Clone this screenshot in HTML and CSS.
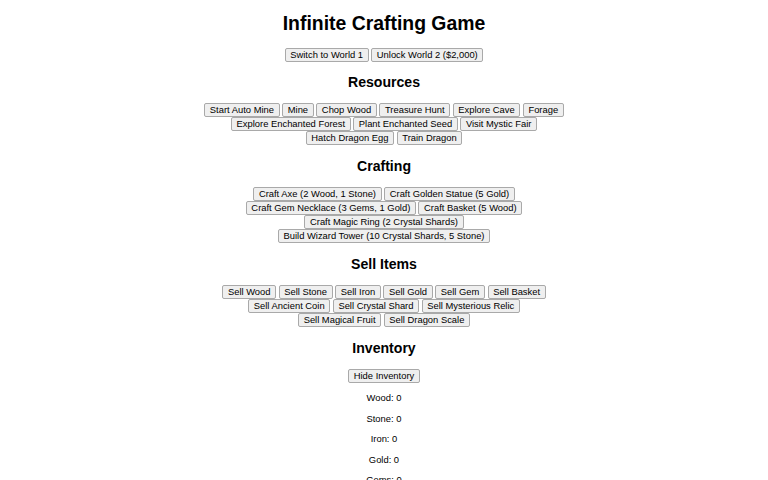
FILE: index.html
```html
<!DOCTYPE html>
<html lang="en">
<head>
<meta charset="utf-8">
<title>Infinite Crafting Game</title>
<link rel="stylesheet" href="styles.css">
</head>
<body>
<main class="game">
  <h1 class="title">Infinite Crafting Game</h1>
  <div class="row world-row">
    <button class="btn">Switch to World 1</button>
    <button class="btn">Unlock World 2 ($2,000)</button>
  </div>

  <section class="section first">
    <h2 class="heading">Resources</h2>
    <div class="rows">
      <div class="row">
        <button class="btn">Start Auto Mine</button>
        <button class="btn">Mine</button>
        <button class="btn">Chop Wood</button>
        <button class="btn">Treasure Hunt</button>
        <button class="btn">Explore Cave</button>
        <button class="btn">Forage</button>
      </div>
      <div class="row">
        <button class="btn">Explore Enchanted Forest</button>
        <button class="btn">Plant Enchanted Seed</button>
        <button class="btn">Visit Mystic Fair</button>
      </div>
      <div class="row">
        <button class="btn">Hatch Dragon Egg</button>
        <button class="btn">Train Dragon</button>
      </div>
    </div>
  </section>

  <section class="section">
    <h2 class="heading">Crafting</h2>
    <div class="rows">
      <div class="row">
        <button class="btn">Craft Axe (2 Wood, 1 Stone)</button>
        <button class="btn">Craft Golden Statue (5 Gold)</button>
      </div>
      <div class="row">
        <button class="btn">Craft Gem Necklace (3 Gems, 1 Gold)</button>
        <button class="btn">Craft Basket (5 Wood)</button>
      </div>
      <div class="row">
        <button class="btn">Craft Magic Ring (2 Crystal Shards)</button>
      </div>
      <div class="row">
        <button class="btn">Build Wizard Tower (10 Crystal Shards, 5 Stone)</button>
      </div>
    </div>
  </section>

  <section class="section">
    <h2 class="heading">Sell Items</h2>
    <div class="rows">
      <div class="row">
        <button class="btn">Sell Wood</button>
        <button class="btn">Sell Stone</button>
        <button class="btn">Sell Iron</button>
        <button class="btn">Sell Gold</button>
        <button class="btn">Sell Gem</button>
        <button class="btn">Sell Basket</button>
      </div>
      <div class="row">
        <button class="btn">Sell Ancient Coin</button>
        <button class="btn">Sell Crystal Shard</button>
        <button class="btn">Sell Mysterious Relic</button>
      </div>
      <div class="row">
        <button class="btn">Sell Magical Fruit</button>
        <button class="btn">Sell Dragon Scale</button>
      </div>
    </div>
  </section>

  <section class="section">
    <h2 class="heading">Inventory</h2>
    <div class="rows">
      <div class="row">
        <button class="btn">Hide Inventory</button>
      </div>
    </div>
    <div class="inventory">
      <p class="item">Wood: 0</p>
      <p class="item">Stone: 0</p>
      <p class="item">Iron: 0</p>
      <p class="item">Gold: 0</p>
      <p class="item">Gems: 0</p>
    </div>
  </section>
</main>
</body>
</html>
```

FILE: styles.css
```css
html, body {
  margin: 0;
  padding: 0;
  background: #ffffff;
}

body {
  font-family: "Liberation Sans", Arial, sans-serif;
  color: #000000;
  font-size: 9.4px;
}

.game {
  display: flex;
  flex-direction: column;
  align-items: center;
  text-align: center;
  padding-top: 12px;
}

.title {
  margin: 0;
  font-size: 19.4px;
  line-height: 22px;
  height: 22px;
  font-weight: bold;
}

.world-row {
  margin-top: 14px;
}

.section {
  display: flex;
  flex-direction: column;
  align-items: center;
  margin-top: 13px;
}

.section.first {
  margin-top: 12px;
}

.heading {
  margin: 0;
  font-size: 14.1px;
  line-height: 16px;
  height: 16px;
  font-weight: bold;
}

.rows {
  display: flex;
  flex-direction: column;
  align-items: center;
  margin-top: 13px;
}

.row {
  display: flex;
  justify-content: center;
  gap: 2.6px;
  height: 14px;
}

.btn {
  appearance: none;
  -webkit-appearance: none;
  box-sizing: border-box;
  height: 14px;
  font-family: "Liberation Sans", Arial, sans-serif;
  font-size: 9.4px;
  line-height: 10px;
  color: #000000;
  background: #efefef;
  border: 1px solid #a9a9a9;
  border-radius: 2px;
  padding: 1px 4.6px;
  margin: 0;
  white-space: nowrap;
}

.inventory {
  display: flex;
  flex-direction: column;
  align-items: center;
  gap: 9.6px;
  margin-top: 9px;
}

.item {
  margin: 0;
  font-size: 9.4px;
  line-height: 11px;
}
```
